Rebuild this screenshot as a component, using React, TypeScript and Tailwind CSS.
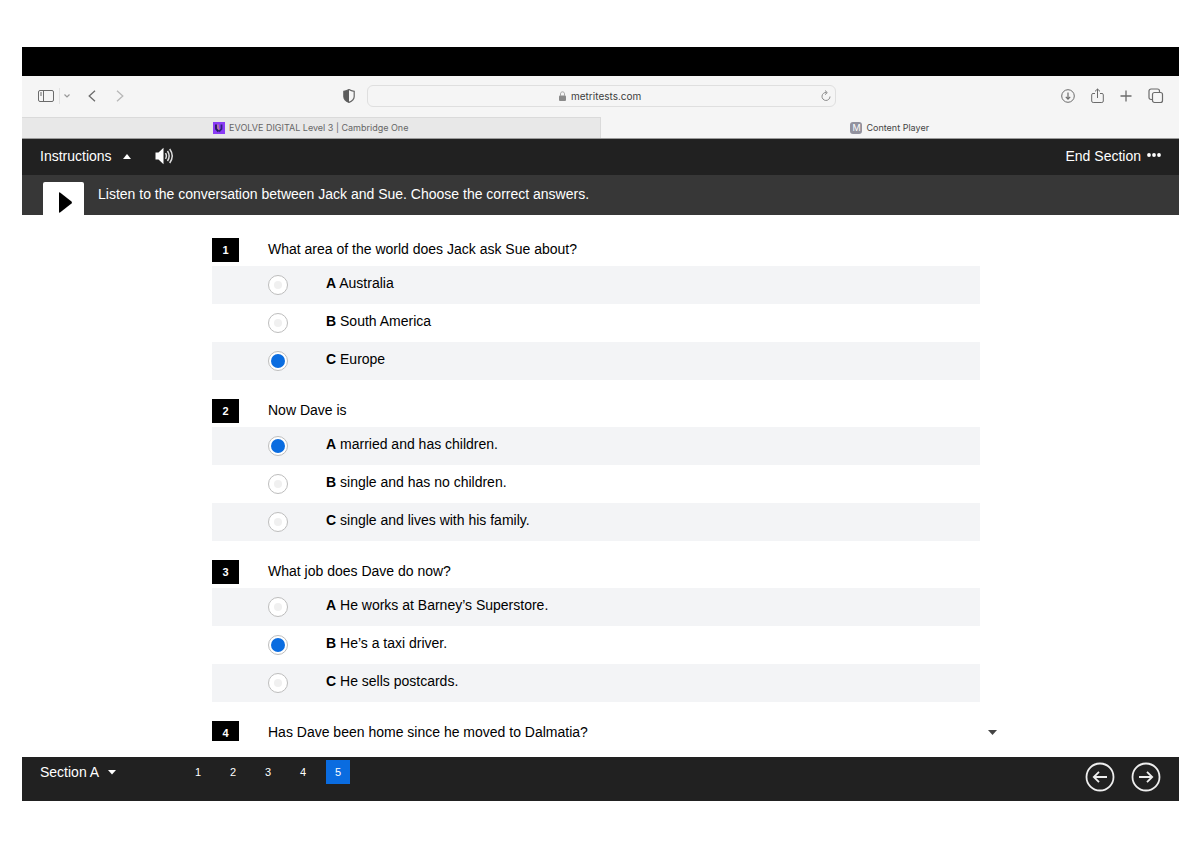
import type { ReactNode } from "react";

type Option = { letter: string; text: string };
type Question = { id: number; prompt: string; options: Option[]; selected?: string };

const questions: Question[] = [
  {
    id: 1,
    prompt: "What area of the world does Jack ask Sue about?",
    options: [
      { letter: "A", text: "Australia" },
      { letter: "B", text: "South America" },
      { letter: "C", text: "Europe" },
    ],
    selected: "C",
  },
  {
    id: 2,
    prompt: "Now Dave is",
    options: [
      { letter: "A", text: "married and has children." },
      { letter: "B", text: "single and has no children." },
      { letter: "C", text: "single and lives with his family." },
    ],
    selected: "A",
  },
  {
    id: 3,
    prompt: "What job does Dave do now?",
    options: [
      { letter: "A", text: "He works at Barney’s Superstore." },
      { letter: "B", text: "He’s a taxi driver." },
      { letter: "C", text: "He sells postcards." },
    ],
    selected: "B",
  },
  { id: 4, prompt: "Has Dave been home since he moved to Dalmatia?", options: [] },
];

function IconButton({ label, children }: { label: string; children: ReactNode }) {
  return (
    <button type="button" aria-label={label} className="flex shrink-0 items-center justify-center">
      {children}
    </button>
  );
}

function Toolbar() {
  return (
    <div className="flex h-[41px] items-center bg-[#f5f5f5] pr-[15px] pb-[2px] pl-4 text-[#6b6b6b]">
      <div className="flex flex-1 items-center">
        <IconButton label="Sidebar">
          <svg width="16" height="12" viewBox="0 0 16 12" fill="none" stroke="currentColor">
            <rect x="0.5" y="0.5" width="15" height="11" rx="1.5" />
            <path d="M5.5 .5v11M2 3h2M2 5h2" />
          </svg>
        </IconButton>
        <span className="ml-[5px] h-4 w-px bg-[#e2e2e2]" />
        <span className="ml-1">
          <IconButton label="Tab groups">
            <svg width="6" height="4" viewBox="0 0 6 4" fill="none" stroke="#999" strokeWidth="1.2">
              <path d="M.5 .5L3 3L5.500 .5" />
            </svg>
          </IconButton>
        </span>
        <span className="ml-[18px]">
          <IconButton label="Back">
            <svg width="8" height="12" viewBox="0 0 8 12" fill="none" stroke="currentColor" strokeWidth="1.300">
              <path d="M7 .7L1.200 6L7 11.300" />
            </svg>
          </IconButton>
        </span>
        <span className="ml-5">
          <IconButton label="Forward">
            <svg width="8" height="12" viewBox="0 0 8 12" fill="none" stroke="#b8b8b8" strokeWidth="1.300">
              <path d="M1 .7L6.800 6L1 11.300" />
            </svg>
          </IconButton>
        </span>
        <span className="mr-3 ml-auto">
          <IconButton label="Privacy report">
            <svg width="12" height="14" viewBox="0 0 12 14">
              <path d="M6 .6C4.500 1.700 2.800 2.200 .8 2.300V7.500C.8 10.400 3 12.200 6 13.400C9 12.200 11.200 10.400 11.200 7.500V2.300C9.200 2.200 7.500 1.700 6 .6Z" fill="none" stroke="#666" strokeWidth="1.200" />
              <path d="M6 .6C4.500 1.700 2.800 2.200 .8 2.300V7.500C.8 10.400 3 12.200 6 13.400Z" fill="#5c5c5c" />
            </svg>
          </IconButton>
        </span>
      </div>
      <div className="flex h-[22px] w-[469px] items-center rounded-md border border-[#dfdfdf] px-1">
        <span className="w-3" />
        <label className="flex flex-1 items-center justify-center gap-[5px]">
          <svg width="7" height="10" viewBox="0 0 7 10">
            <rect y="4.500" width="7" height="5.500" rx="1" fill="#8a8a8a" />
            <path d="M1.500 5V2.800C1.500 .2 5.500 .2 5.500 2.800V5" fill="none" stroke="#a5a5a5" />
          </svg>
          <input
            aria-label="Address"
            defaultValue="metritests.com"
            className="w-[74px] bg-transparent font-['Inter',sans-serif] text-[10px] leading-4 text-[#3c3c3c] outline-none"
          />
        </label>
        <IconButton label="Reload">
          <svg width="10" height="12" viewBox="0 0 10 12" fill="none" stroke="#8c8c8c">
            <path d="M5.500 2.500A4 4 0 1 0 9 6.500M4 .5L6.300 2.600L4 4.700" />
          </svg>
        </IconButton>
      </div>
      <div className="flex flex-1 items-center justify-end gap-4">
        <IconButton label="Downloads">
          <svg width="14" height="14" viewBox="0 0 14 14" fill="none" stroke="currentColor">
            <circle cx="7" cy="7" r="6.300" />
            <path d="M7 3.500V10M4.800 7.900L7 10.100L9.200 7.900" strokeWidth="1.200" />
          </svg>
        </IconButton>
        <IconButton label="Share">
          <svg width="13" height="16" viewBox="0 0 13 16" fill="none" stroke="currentColor">
            <path d="M4 5.500H2A1.300 1.300 0 0 0 .7 6.800V13A1.500 1.500 0 0 0 2.200 14.500H10.800A1.500 1.500 0 0 0 12.300 13V6.800A1.300 1.300 0 0 0 11 5.500H9M6.500 10V1M4 3.400L6.500 1L9 3.400" />
          </svg>
        </IconButton>
        <IconButton label="New tab">
          <svg width="12" height="12" viewBox="0 0 12 12" fill="none" stroke="currentColor" strokeWidth="1.300">
            <path d="M6 .5V11.500M.5 6H11.500" />
          </svg>
        </IconButton>
        <IconButton label="Tab overview">
          <svg width="16" height="16" viewBox="0 0 16 16" fill="none" stroke="currentColor" strokeWidth="1.200">
            <rect x="4.500" y="4.500" width="10" height="10" rx="2" />
            <path d="M4.500 11.500H3A2 2 0 0 1 1 9.500V3A2 2 0 0 1 3 1H9.500A2 2 0 0 1 11.500 3V4.500" />
          </svg>
        </IconButton>
      </div>
    </div>
  );
}

function Tabs() {
  return (
    <nav className="grid h-[22px] grid-cols-2 border-b border-[#9a9a9a] bg-[#f5f5f5] font-['Inter',sans-serif] text-[9px] leading-4">
      <a
        href="#evolve"
        className="flex items-center justify-center gap-1 border-t border-r border-[#dadada] bg-[#e8e8e8] text-[#666]"
      >
        <svg width="12" height="12" viewBox="0 0 12 12">
          <rect width="12" height="12" fill="#8a3cf5" />
          <path d="M3 2.500V7L5.500 9.500" fill="none" stroke="#251b5c" strokeWidth="1.800" />
          <path d="M5 2.500V6.500L7 8" fill="none" stroke="#d6a85a" />
          <path d="M8.500 2.500V7L6 9.500" fill="none" stroke="#302080" strokeWidth="1.800" />
        </svg>
        EVOLVE DIGITAL Level 3 | Cambridge One
      </a>
      <a href="#player" aria-current="page" className="flex items-center justify-center gap-1 text-[#444]">
        <span className="flex size-3 items-center justify-center rounded-[3px] bg-[#92929e] text-white">M</span>
        Content Player
      </a>
    </nav>
  );
}

function Header() {
  return (
    <header className="text-white">
      <div className="flex h-9 items-center bg-[#212121] px-[18px] pb-[2px]">
        <button type="button" className="flex items-center gap-[11px] leading-4">
          Instructions
          <svg width="8" height="5" viewBox="0 0 8 5" fill="white">
            <path d="M0 5L4 0L8 5Z" />
          </svg>
        </button>
        <span className="ml-6">
          <IconButton label="Volume">
            <svg width="20" height="18" viewBox="0 0 20 18">
              <path d="M.5 5.500H3.500L8.500 .8V17.200L3.500 12.500H.5Z" fill="white" />
              <path d="M10.500 6.200Q12.300 9 10.500 11.800M12.500 4Q15.800 9 12.500 14M14.700 2Q19.800 9 14.700 16" fill="none" stroke="#ddd" strokeWidth="1.500" />
            </svg>
          </IconButton>
        </span>
        <button type="button" className="ml-auto flex items-center gap-[6px] leading-4">
          End Section
          <svg width="14" height="8" viewBox="0 0 14 8" fill="white">
            <circle cx="2" cy="3" r="1.900" />
            <circle cx="7" cy="3" r="1.900" />
            <circle cx="12" cy="3" r="1.900" />
          </svg>
        </button>
      </div>
      <div className="flex h-10 items-stretch bg-[#373737] pt-[7px] pl-[21px]">
        <button
          type="button"
          aria-label="Play"
          className="flex w-[41px] items-center justify-center rounded-t-xs bg-white pt-2 pl-1"
        >
          <svg width="13" height="21" viewBox="0 0 13 21">
            <path d="M0 1Q0 0 1 .5L12.500 9.500Q13.300 10.500 12.500 11.500L1 20.500Q0 21 0 20Z" />
          </svg>
        </button>
        <p className="ml-[14px] pt-1 leading-4">
          Listen to the conversation between Jack and Sue. Choose the correct answers.
        </p>
      </div>
    </header>
  );
}

function QuestionBlock({ question }: { question: Question }) {
  const last = question.options.length === 0;
  return (
    <fieldset>
      <legend className="flex h-7 w-full items-start">
        <span
          className={`flex w-[27px] items-center justify-center bg-black text-[11px] font-bold text-white ${
            last ? "h-5 pt-1" : "h-6"
          }`}
        >
          {question.id}
        </span>
        <span className="ml-[29px] pt-[3px] leading-4">{question.prompt}</span>
      </legend>
      {question.options.map((option) => (
        <label key={option.letter} className="flex h-[38px] items-center pl-14 even:bg-[#f3f4f6]">
          <input
            type="radio"
            name={`question-${question.id}`}
            defaultChecked={option.letter === question.selected}
            className="grid size-5 appearance-none place-content-center rounded-full border border-[#bdbdbd] bg-white before:size-2 before:rounded-full before:bg-[#f0f0f0] before:content-[''] checked:before:size-[14px] checked:before:bg-[#0a6ce0]"
          />
          <span className="ml-[38px] pb-1 leading-4">
            <b>{option.letter}</b> {option.text}
          </span>
        </label>
      ))}
    </fieldset>
  );
}

function Footer() {
  return (
    <footer className="flex h-11 items-start bg-[#212121] px-[18px] text-white">
      <button type="button" className="mt-[7px] flex items-center gap-[9px] leading-4">
        Section A
        <svg width="8" height="5" viewBox="0 0 8 5" fill="white">
          <path d="M0 0H8L4 4.500Z" />
        </svg>
      </button>
      <nav aria-label="Pages" className="mt-[3px] ml-[70px] flex gap-[11px] text-[11px]">
        {[1, 2, 3, 4, 5].map((page) => (
          <a
            key={page}
            href={`#page-${page}`}
            aria-current={page === 5 ? "page" : undefined}
            className="flex size-6 items-center justify-center aria-[current=page]:bg-[#0a6ce0]"
          >
            {page}
          </a>
        ))}
      </nav>
      <div className="mt-[5px] ml-auto flex gap-4">
        <IconButton label="Previous page">
          <svg width="30" height="30" viewBox="0 0 30 30" fill="none" stroke="#eee" strokeWidth="1.800">
            <circle cx="15" cy="15" r="13.500" />
            <path d="M22 15H9M14 9.800L8.800 15L14 20.200" />
          </svg>
        </IconButton>
        <IconButton label="Next page">
          <svg width="30" height="30" viewBox="0 0 30 30" fill="none" stroke="#eee" strokeWidth="1.800">
            <circle cx="15" cy="15" r="13.500" />
            <path d="M8 15H21M16 9.800L21.200 15L16 20.200" />
          </svg>
        </IconButton>
      </div>
    </footer>
  );
}

export default function App() {
  return (
    <div className="min-h-screen bg-white pt-[47px] pr-[21px] pb-12 pl-[22px] font-['Liberation_Sans',Arial,sans-serif] text-[14px] text-black">
      <div className="h-[29px] bg-black" />
      <Toolbar />
      <Tabs />
      <Header />
      <main className="flex items-end pt-[23px] pb-2 pl-[190px]">
        <form className="flex w-full max-w-3xl flex-col gap-[19px]">
          {questions.map((question) => (
            <QuestionBlock key={question.id} question={question} />
          ))}
        </form>
        <span className="mb-[14px] ml-2">
          <IconButton label="Scroll down">
            <svg width="9" height="5" viewBox="0 0 9 5" fill="#444">
              <path d="M0 0H9L4.500 5Z" />
            </svg>
          </IconButton>
        </span>
      </main>
      <Footer />
    </div>
  );
}
